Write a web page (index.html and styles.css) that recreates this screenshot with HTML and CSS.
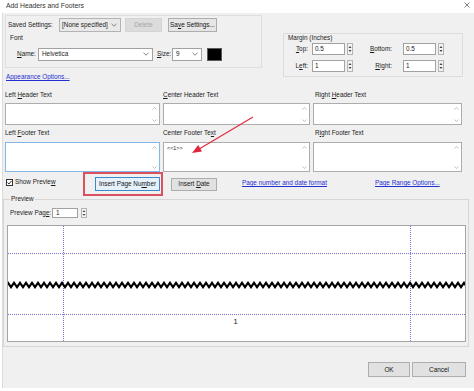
FILE: index.html
```html
<!DOCTYPE html>
<html>
<head>
<meta charset="utf-8">
<title>Add Headers and Footers</title>
<link rel="stylesheet" href="styles.css">
</head>
<body>
<div class="window">
  <div class="titlebar">
    <span class="title">Add Headers and Footers</span>
    <svg class="close" width="6" height="6" viewBox="0 0 6 6"><path d="M0.5 0.5L5.5 5.5M5.5 0.5L0.5 5.5" stroke="#666" stroke-width="0.8"/></svg>
  </div>
  <div class="dialog">
    <div class="top">
      <div class="left-col">
        <div class="font-panel">
          <div class="saved-row">
            <span class="saved-label">Saved Settings:</span>
            <div class="combo saved-combo"><span>[None specified]</span><svg class="chev" width="6" height="4" viewBox="0 0 6 4"><path d="M0.5 0.8L3 3.2L5.5 0.8" fill="none" stroke="#666" stroke-width="0.8"/></svg></div>
            <div class="btn btn-disabled delete"><span>Delete</span></div>
            <div class="btn save"><span>Sa<u>v</u>e Settings...</span></div>
          </div>
          <div class="font-label">Font</div>
          <div class="name-row">
            <span class="name-label"><u>N</u>ame:</span>
            <div class="field name-field"><span>Helvetica</span><svg class="chev" width="6" height="4" viewBox="0 0 6 4"><path d="M0.5 0.8L3 3.2L5.5 0.8" fill="none" stroke="#666" stroke-width="0.8"/></svg></div>
            <span class="size-label"><u>S</u>ize:</span>
            <div class="field size-field"><span>9</span><svg class="chev" width="6" height="4" viewBox="0 0 6 4"><path d="M0.5 0.8L3 3.2L5.5 0.8" fill="none" stroke="#666" stroke-width="0.8"/></svg></div>
            <div class="swatch"></div>
          </div>
        </div>
        <a class="link appearance">Appearance Options...</a>
      </div>
      <div class="margin-group">
        <div class="group-title">Margin (Inches)</div>
        <div class="margin-grid">
          <span class="mlabel"><u>T</u>op:</span>
          <div class="minput">0.5</div>
          <svg class="spin" width="6" height="12" viewBox="0 0 6 12"><rect x="0.5" y="0.5" width="5" height="11" fill="#f3f3f3" stroke="#b4b4b4"/><path d="M1.5 5L3 3L4.5 5Z M1.5 7L3 9L4.5 7Z" fill="#444"/></svg>
          <span class="mlabel mlabel2"><u>B</u>ottom:</span>
          <div class="minput">0.5</div>
          <svg class="spin" width="6" height="12" viewBox="0 0 6 12"><rect x="0.5" y="0.5" width="5" height="11" fill="#f3f3f3" stroke="#b4b4b4"/><path d="M1.5 5L3 3L4.5 5Z M1.5 7L3 9L4.5 7Z" fill="#444"/></svg>
          <span class="mlabel">L<u>e</u>ft:</span>
          <div class="minput">1</div>
          <svg class="spin" width="6" height="12" viewBox="0 0 6 12"><rect x="0.5" y="0.5" width="5" height="11" fill="#f3f3f3" stroke="#b4b4b4"/><path d="M1.5 5L3 3L4.5 5Z M1.5 7L3 9L4.5 7Z" fill="#444"/></svg>
          <span class="mlabel mlabel2"><u>R</u>ight:</span>
          <div class="minput">1</div>
          <svg class="spin" width="6" height="12" viewBox="0 0 6 12"><rect x="0.5" y="0.5" width="5" height="11" fill="#f3f3f3" stroke="#b4b4b4"/><path d="M1.5 5L3 3L4.5 5Z M1.5 7L3 9L4.5 7Z" fill="#444"/></svg>
        </div>
      </div>
    </div>

    <div class="text-grid">
      <div class="tcell">
        <div class="tlabel">Left <u>H</u>eader Text</div>
        <div class="tbox hbox"><div class="tcontent"></div><div class="tscroll"><svg width="5" height="3" viewBox="0 0 5 3"><path d="M0.5 2.5L2.5 0.5L4.5 2.5" fill="none" stroke="#b0b0b0" stroke-width="0.8"/></svg><svg width="5" height="3" viewBox="0 0 5 3"><path d="M0.5 0.5L2.5 2.5L4.5 0.5" fill="none" stroke="#b0b0b0" stroke-width="0.8"/></svg></div></div>
      </div>
      <div class="tcell">
        <div class="tlabel"><u>C</u>enter Header Text</div>
        <div class="tbox hbox"><div class="tcontent"></div><div class="tscroll"><svg width="5" height="3" viewBox="0 0 5 3"><path d="M0.5 2.5L2.5 0.5L4.5 2.5" fill="none" stroke="#b0b0b0" stroke-width="0.8"/></svg><svg width="5" height="3" viewBox="0 0 5 3"><path d="M0.5 0.5L2.5 2.5L4.5 0.5" fill="none" stroke="#b0b0b0" stroke-width="0.8"/></svg></div></div>
      </div>
      <div class="tcell tcell-right">
        <div class="tlabel">Right <u>H</u>eader Text</div>
        <div class="tbox hbox"><div class="tcontent"></div><div class="tscroll"><svg width="5" height="3" viewBox="0 0 5 3"><path d="M0.5 2.5L2.5 0.5L4.5 2.5" fill="none" stroke="#b0b0b0" stroke-width="0.8"/></svg><svg width="5" height="3" viewBox="0 0 5 3"><path d="M0.5 0.5L2.5 2.5L4.5 0.5" fill="none" stroke="#b0b0b0" stroke-width="0.8"/></svg></div></div>
      </div>
      <div class="tcell">
        <div class="tlabel flabel">Left <u>F</u>ooter Text</div>
        <div class="tbox fbox focused"><div class="tcontent"></div><div class="tscroll"><svg width="5" height="3" viewBox="0 0 5 3"><path d="M0.5 2.5L2.5 0.5L4.5 2.5" fill="none" stroke="#b0b0b0" stroke-width="0.8"/></svg><svg width="5" height="3" viewBox="0 0 5 3"><path d="M0.5 0.5L2.5 2.5L4.5 0.5" fill="none" stroke="#b0b0b0" stroke-width="0.8"/></svg></div></div>
      </div>
      <div class="tcell">
        <div class="tlabel flabel">Center Footer Te<u>x</u>t</div>
        <div class="tbox fbox"><div class="tcontent small">&lt;&lt;1&gt;&gt;</div><div class="tscroll"><svg width="5" height="3" viewBox="0 0 5 3"><path d="M0.5 2.5L2.5 0.5L4.5 2.5" fill="none" stroke="#b0b0b0" stroke-width="0.8"/></svg><svg width="5" height="3" viewBox="0 0 5 3"><path d="M0.5 0.5L2.5 2.5L4.5 0.5" fill="none" stroke="#b0b0b0" stroke-width="0.8"/></svg></div></div>
      </div>
      <div class="tcell tcell-right">
        <div class="tlabel flabel">R<u>i</u>ght Footer Text</div>
        <div class="tbox fbox"><div class="tcontent"></div><div class="tscroll"><svg width="5" height="3" viewBox="0 0 5 3"><path d="M0.5 2.5L2.5 0.5L4.5 2.5" fill="none" stroke="#b0b0b0" stroke-width="0.8"/></svg><svg width="5" height="3" viewBox="0 0 5 3"><path d="M0.5 0.5L2.5 2.5L4.5 0.5" fill="none" stroke="#b0b0b0" stroke-width="0.8"/></svg></div></div>
      </div>
    </div>

    <div class="actions">
      <div class="check-wrap">
        <svg class="checkbox" width="7" height="7" viewBox="0 0 7 7"><rect x="0.5" y="0.5" width="6" height="6" fill="#fff" stroke="#333"/><path d="M1.5 3.5L3 5L5.6 1.8" fill="none" stroke="#222" stroke-width="0.9"/></svg>
        <span class="check-label">Show Previe<u>w</u></span>
      </div>
      <div class="highlight">
        <div class="btn btn-focus insert-page"><span>Insert Page Nu<u>m</u>ber</span></div>
      </div>
      <div class="btn insert-date"><span>Insert <u>D</u>ate</span></div>
      <a class="link link-format">Page number and date format</a>
      <a class="link">Page Range Options...</a>
    </div>

    <fieldset class="preview">
      <legend>Preview</legend>
      <div class="page-row">
        <span class="page-label">Preview Pag<u>e</u>:</span>
        <div class="page-input">1</div>
        <svg class="page-spin" width="6" height="10" viewBox="0 0 6 10"><rect x="0.5" y="0.5" width="5" height="9" fill="#f3f3f3" stroke="#b4b4b4"/><path d="M1.5 4L3 2.3L4.5 4Z M1.5 6L3 7.7L4.5 6Z" fill="#444"/></svg>
      </div>
      <div class="canvas">
        <svg width="457" height="115" viewBox="0 0 457 115">
          <defs>
            <pattern id="zz" x="0" y="55" width="6" height="8" patternUnits="userSpaceOnUse">
              <path d="M-3 6.2L0 1.8L3 6.2L6 1.8L9 6.2" fill="none" stroke="#000" stroke-width="2.1"/>
            </pattern>
          </defs>
          <g stroke="#7474d6" stroke-width="1" stroke-dasharray="1 1">
            <line x1="55.5" y1="0" x2="55.5" y2="115"/>
            <line x1="402.5" y1="0" x2="402.5" y2="115"/>
            <line x1="0" y1="27.5" x2="457" y2="27.5"/>
            <line x1="0" y1="88.5" x2="457" y2="88.5"/>
          </g>
          <rect x="0" y="55" width="457" height="8" fill="url(#zz)"/>
          <text x="227.5" y="97.5" font-family="Liberation Sans, Arial, sans-serif" font-size="7.5" fill="#111" text-anchor="middle">1</text>
        </svg>
      </div>
    </fieldset>

    <div class="buttons">
      <div class="btn ok"><span>OK</span></div>
      <div class="btn cancel"><span>Cancel</span></div>
    </div>
  </div>

  <svg class="annotation" width="474" height="391" viewBox="0 0 474 391">
    <line x1="253" y1="117" x2="200" y2="148.5" stroke="#e0283c" stroke-width="1.1"/>
    <polygon points="192,153 202,151.6 198.2,145" fill="#e0283c"/>
  </svg>
</div>
</body>
</html>
```

FILE: styles.css
```css
* {
  box-sizing: border-box;
}

html,
body {
  margin: 0;
  padding: 0;
  background: #ffffff;
}

body {
  font-family: "Liberation Sans", Arial, sans-serif;
  font-size: 6.4px;
  line-height: 8px;
  color: #1b1b1b;
}

u {
  text-decoration: underline;
  text-underline-offset: 1px;
}

.window {
  position: relative;
  width: 474px;
  height: 391px;
  background: #ffffff;
  overflow: hidden;
}

/* title bar */
.titlebar {
  height: 13px;
  display: flex;
  align-items: flex-start;
  justify-content: space-between;
  padding: 1px 4px 0 6px;
}

.title {
  font-size: 6.8px;
  line-height: 9px;
  color: #333333;
}

.close {
  margin-top: 1px;
}

/* dialog body */
.dialog {
  margin-left: 2px;
  height: 375px;
  background: #f0f0f0;
  box-shadow: inset 1px 0 0 #dcdcdc;
  overflow: hidden;
}

.top {
  display: flex;
  align-items: flex-start;
  margin-top: 2px;
  padding-left: 3px;
}

.left-col {
  width: 257px;
}

.font-panel {
  width: 257px;
  height: 53px;
  border: 1px solid #dedede;
  padding: 2px 0 0 2px;
}

.saved-row {
  display: flex;
  align-items: center;
  height: 14px;
}

.saved-label {
  width: 51px;
}

.combo {
  display: flex;
  align-items: center;
  justify-content: space-between;
  height: 14px;
  padding: 0 3px 0 2px;
  border: 1px solid #b3b3b3;
  background: #e9e9e9;
}

.saved-combo {
  width: 62px;
  margin-right: 4px;
}

.btn {
  display: flex;
  align-items: center;
  justify-content: center;
  height: 14px;
  border: 1px solid #adadad;
  background: #e1e1e1;
  color: #151515;
  white-space: nowrap;
}

.btn-disabled {
  border-color: #d4d4d4;
  background: #dcdcdc;
  color: #a6a6a6;
}

.delete {
  width: 37px;
  margin-right: 6px;
}

.save {
  width: 49px;
  background: #e6e6e6;
}

.font-label {
  margin-top: 1px;
  height: 9px;
  line-height: 9px;
  padding-left: 2px;
}

.name-row {
  display: flex;
  align-items: center;
  height: 14px;
  margin-top: 5px;
  padding-left: 9px;
}

.name-label {
  width: 21px;
}

.field {
  display: flex;
  align-items: center;
  justify-content: space-between;
  height: 13px;
  padding: 0 3px 0 3px;
  background: #ffffff;
  border: 1px solid #a2a2a2;
}

.name-field {
  width: 115px;
}

.size-label {
  width: 15px;
  margin-left: 4px;
}

.size-field {
  width: 30px;
}

.swatch {
  width: 15px;
  height: 13px;
  margin-left: 5px;
  background: #000000;
  border: 1px solid #5a5a5a;
}

.link {
  color: #1f2fd0;
  text-decoration: underline;
  white-space: nowrap;
}

.appearance {
  display: block;
  margin-top: 5px;
  padding-left: 1px;
  line-height: 8px;
}

/* margin group */
.margin-group {
  width: 180px;
  height: 44px;
  margin-left: 21px;
  margin-top: 18px;
  border: 1px solid #dcdcdc;
  padding-left: 4px;
}

.group-title {
  line-height: 8px;
}

.margin-grid {
  display: grid;
  grid-template-columns: 24px 35px 7px 49px 35px 7px;
  grid-auto-rows: 12px;
  row-gap: 5px;
  margin-top: 1px;
  align-items: center;
}

.mlabel {
  text-align: right;
  padding-right: 4px;
}

.mlabel2 {
  padding-right: 11px;
}

.minput {
  width: 33px;
  height: 12px;
  line-height: 10px;
  padding-left: 2px;
  background: #ffffff;
  border: 1px solid #a2a2a2;
}

.spin {
  display: block;
}

/* header/footer text boxes */
.text-grid {
  display: grid;
  grid-template-columns: 155px 147px 149px;
  column-gap: 3px;
  row-gap: 4px;
  margin-top: 10px;
  padding-left: 3px;
}

.tcell {
  display: flex;
  flex-direction: column;
}

.tcell-right .tlabel {
  padding-left: 2px;
}

.tlabel {
  line-height: 8px;
  margin-bottom: 4px;
}

.tlabel.flabel {
  margin-bottom: 5px;
}

.tbox {
  display: flex;
  background: #ffffff;
  border: 1px solid #adadad;
}

.hbox {
  height: 22px;
}

.fbox {
  height: 30px;
}

.tbox.focused {
  border-color: #86b6e6;
}

.tcontent {
  flex: 1;
  padding: 2px 3px;
}

.tcontent.small {
  font-size: 5.4px;
  line-height: 7px;
}

.tscroll {
  width: 9px;
  display: flex;
  flex-direction: column;
  justify-content: space-between;
  align-items: center;
  padding: 3px 0 2px;
}

.tscroll svg {
  display: block;
}

/* action row */
.actions {
  display: flex;
  align-items: center;
  height: 24px;
  padding-left: 4px;
}

.check-wrap {
  display: flex;
  align-items: center;
  width: 77px;
  margin-top: -4px;
}

.checkbox {
  display: block;
  margin-right: 2px;
}

.highlight {
  display: flex;
  align-items: center;
  width: 80px;
  height: 24px;
  padding-left: 10px;
  border: 2px solid #d9505f;
}

.btn-focus {
  border-color: #4088cc;
  background: #e5f1fb;
}

.insert-page {
  width: 65px;
  height: 14px;
}

.insert-date {
  width: 46px;
  height: 13px;
  margin-left: 8px;
}

.link-format {
  display: block;
  width: 133px;
  margin-left: 25px;
  margin-top: -2px;
}

.actions .link {
  margin-top: -2px;
}

/* preview group */
.preview {
  width: 466px;
  margin: -1px 0 0 1px;
  padding: 0 0 4px 0;
  border: 1px solid #d6d6d6;
  min-width: 0;
}

.preview legend {
  margin-left: 6px;
  padding: 0 1px;
  line-height: 8px;
}

.page-row {
  display: flex;
  align-items: center;
  height: 11px;
  margin-top: 4px;
  padding-left: 6px;
}

.page-label {
  width: 42px;
}

.page-input {
  width: 26px;
  height: 10px;
  line-height: 8px;
  padding-left: 3px;
  background: #ffffff;
  border: 1px solid #a2a2a2;
}

.page-spin {
  display: block;
  margin-left: 3px;
}

.canvas {
  width: 459px;
  height: 117px;
  margin: 7px 0 0 3px;
  background: #ffffff;
  border: 1px solid #a4a4a4;
}

.canvas svg {
  display: block;
}

/* bottom buttons */
.buttons {
  display: flex;
  justify-content: flex-end;
  margin-top: 15px;
  padding-right: 8px;
}

.ok {
  width: 42px;
  height: 15px;
  margin-right: 2px;
}

.cancel {
  width: 54px;
  height: 15px;
}

/* red annotation arrow over the dialog */
.annotation {
  position: absolute;
  left: 0;
  top: 0;
  pointer-events: none;
}
```
